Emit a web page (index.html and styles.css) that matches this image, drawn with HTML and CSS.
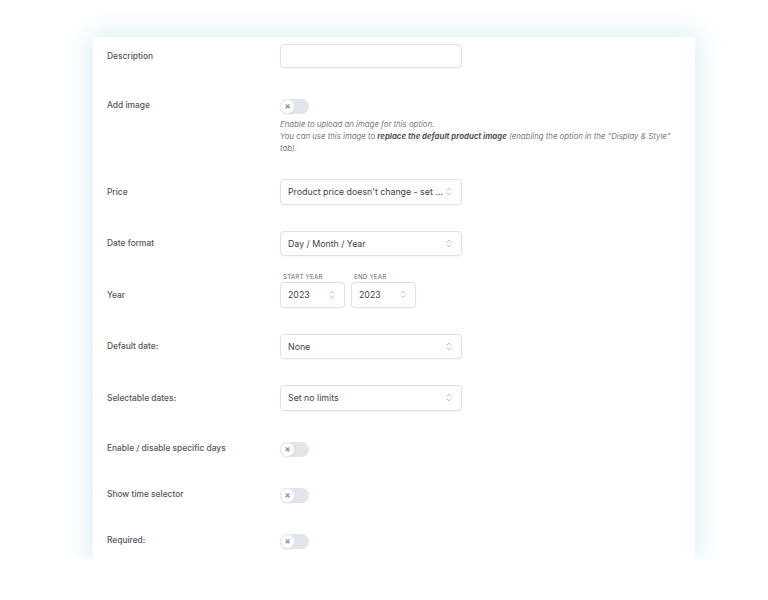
FILE: index.html
```html
<!DOCTYPE html>
<html lang="en">
<head>
<meta charset="utf-8">
<title>Date option settings</title>
<link rel="stylesheet" href="styles.css">
</head>
<body>
<div class="card">
  <div class="row row-first row-center">
    <div class="label">Description</div>
    <div class="control"><div class="input"></div></div>
  </div>

  <div class="row row-toggle">
    <div class="label">Add image</div>
    <div class="control">
      <div class="toggle"><span class="knob">&times;</span></div>
      <div class="help">Enable to upload an image for this option.<br>You can use this image to <b>replace the default product image</b> (enabling the option in the "Display &amp; Style" tab).</div>
    </div>
  </div>

  <div class="row row-center">
    <div class="label">Price</div>
    <div class="control"><div class="select"><span>Product price doesn't change - set ...</span><svg class="chev" viewBox="0 0 6 9"><path d="M1 3.2 L3 1.2 L5 3.2 M1 5.8 L3 7.8 L5 5.8"/></svg></div></div>
  </div>

  <div class="row row-center">
    <div class="label">Date format</div>
    <div class="control"><div class="select"><span>Day / Month / Year</span><svg class="chev" viewBox="0 0 6 9"><path d="M1 3.2 L3 1.2 L5 3.2 M1 5.8 L3 7.8 L5 5.8"/></svg></div></div>
  </div>

  <div class="row row-year">
    <div class="label">Year</div>
    <div class="control years">
      <div class="year-col">
        <div class="sublabel">START YEAR</div>
        <div class="select small"><span>2023</span><svg class="chev" viewBox="0 0 6 9"><path d="M1 3.2 L3 1.2 L5 3.2 M1 5.8 L3 7.8 L5 5.8"/></svg></div>
      </div>
      <div class="year-col">
        <div class="sublabel">END YEAR</div>
        <div class="select small"><span>2023</span><svg class="chev" viewBox="0 0 6 9"><path d="M1 3.2 L3 1.2 L5 3.2 M1 5.8 L3 7.8 L5 5.8"/></svg></div>
      </div>
    </div>
  </div>

  <div class="row row-center">
    <div class="label">Default date:</div>
    <div class="control"><div class="select"><span>None</span><svg class="chev" viewBox="0 0 6 9"><path d="M1 3.2 L3 1.2 L5 3.2 M1 5.8 L3 7.8 L5 5.8"/></svg></div></div>
  </div>

  <div class="row row-center">
    <div class="label">Selectable dates:</div>
    <div class="control"><div class="select"><span>Set no limits</span><svg class="chev" viewBox="0 0 6 9"><path d="M1 3.2 L3 1.2 L5 3.2 M1 5.8 L3 7.8 L5 5.8"/></svg></div></div>
  </div>

  <div class="row row-toggle">
    <div class="label">Enable / disable specific days</div>
    <div class="control"><div class="toggle"><span class="knob">&times;</span></div></div>
  </div>

  <div class="row row-toggle">
    <div class="label">Show time selector</div>
    <div class="control"><div class="toggle"><span class="knob">&times;</span></div></div>
  </div>

  <div class="row row-toggle row-last">
    <div class="label">Required:</div>
    <div class="control"><div class="toggle"><span class="knob">&times;</span></div></div>
  </div>
</div>
</body>
</html>
```

FILE: styles.css
```css
html, body {
  margin: 0;
  padding: 0;
  background: #ffffff;
}

body {
  font-family: Inter, "Noto Sans", "Liberation Sans", sans-serif;
  color: #50575e;
  padding-top: 37px;
}

.card {
  width: 602px;
  margin-left: 93px;
  background: #ffffff;
  box-shadow: 0 0 24px 4px rgba(170, 222, 232, 0.45);
  display: flex;
  flex-direction: column;
}

.row {
  display: flex;
  padding: 13px 14px;
}

.row-first {
  padding-top: 7px;
}

.row-center {
  align-items: center;
}

.row-toggle {
  align-items: flex-start;
  padding-top: 13px;
  padding-bottom: 12px;
}

.row-toggle .label {
  padding-top: 2px;
  line-height: 19px;
}

.row-last {
  padding-bottom: 9px;
}

.row-year {
  align-items: flex-end;
  padding-top: 3px;
}

.label {
  width: 173px;
  flex: none;
  font-size: 8.4px;
  line-height: 20px;
  color: #50575e;
  font-weight: 500;
}

.row-year .label {
  line-height: 25px;
}

.control {
  display: flex;
  flex-direction: column;
}

.input {
  width: 182px;
  height: 24px;
  box-sizing: border-box;
  border: 1px solid #dfe1e4;
  border-radius: 4px;
  background: #fff;
  box-shadow: 0 1px 2px rgba(0, 0, 0, 0.04);
}

.select {
  width: 182px;
  height: 25.5px;
  box-sizing: border-box;
  border: 1px solid #dfe1e4;
  border-radius: 4px;
  background: #fff;
  box-shadow: 0 1px 2px rgba(0, 0, 0, 0.04);
  display: flex;
  align-items: center;
  justify-content: space-between;
  padding: 0 9px 0 7px;
  font-size: 8.8px;
  color: #3c434a;
}

.select span {
  white-space: nowrap;
}

.select.small {
  width: 65px;
}

.chev {
  width: 6px;
  height: 9px;
  flex: none;
}

.chev path {
  fill: none;
  stroke: #a7aaad;
  stroke-width: 0.8;
  stroke-linecap: round;
  stroke-linejoin: round;
}

.years {
  flex-direction: row;
  gap: 6px;
}

.year-col {
  display: flex;
  flex-direction: column;
}

.sublabel {
  font-size: 6.2px;
  line-height: 10px;
  letter-spacing: 0.2px;
  color: #646970;
  padding-left: 3px;
  font-weight: 400;
}

.toggle {
  width: 29px;
  height: 15px;
  margin-top: 5px;
  border-radius: 8px;
  background: #e1e5ec;
  position: relative;
}

.knob {
  position: absolute;
  left: 0;
  top: 0;
  width: 15px;
  height: 15px;
  box-sizing: border-box;
  border-radius: 50%;
  background: #ffffff;
  border: 1px solid #e6e8ec;
  box-shadow: 0 1px 2px rgba(0, 0, 0, 0.08);
  font-size: 9px;
  line-height: 12px;
  text-align: center;
  color: #8c8f94;
  font-weight: 700;
}

.help {
  margin-top: 4px;
  font-size: 7.8px;
  line-height: 12px;
  font-style: italic;
  color: #787c82;
  width: 394px;
}

.help b {
  color: #50575e;
  font-weight: 700;
}
```
